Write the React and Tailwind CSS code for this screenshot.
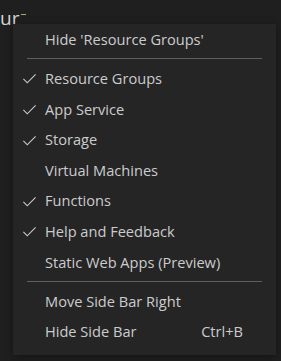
import React from "react";

const items = [
  { label: "Resource Groups", checked: true },
  { label: "App Service", checked: true },
  { label: "Storage", checked: true },
  { label: "Virtual Machines", checked: false },
  { label: "Functions", checked: true },
  { label: "Help and Feedback", checked: true },
  { label: "Static Web Apps (Preview)", checked: false },
];

function Check() {
  return (
    <svg width="15" height="15" viewBox="0 0 16 16" fill="none" className="text-[#cccccc]">
      <path d="M1.5 8.5 L5.6 12.6 L14.5 3.6" stroke="currentColor" strokeWidth="1.2" />
    </svg>
  );
}

function Item({ label, checked, keybinding }) {
  return (
    <div className="h-[30.6px] flex items-center">
      <div className="w-[32px] flex justify-end pr-[8px]">{checked && <Check />}</div>
      <span className="flex-1">{label}</span>
      {keybinding && <span className="pr-[33px]">{keybinding}</span>}
    </div>
  );
}

function Separator() {
  return (
    <div className="h-[8.4px] px-[14px] pt-[3px]">
      <div className="border-t border-[#5f5f5f]" />
    </div>
  );
}

export default function App() {
  return (
    <div className="relative w-[281px] h-[361px] overflow-hidden bg-[#1f1f1f] font-['Open_Sans',sans-serif] text-[#cccccc]">
      {/* clipped explorer title behind the menu */}
      <div className="flex items-start pt-[6px]">
        <span className="text-[19px] leading-[24px] text-[#d4d4d4]">ur</span>
        <span className="mt-[8px] ml-[2px] w-[5px] h-[1px] bg-[#b0a080]" />
      </div>
      <div className="absolute left-[13px] top-[24px] w-[263px] h-[331px] bg-[#252526] shadow-[0_2px_8px_rgba(0,0,0,0.36)] text-[14.6px] pt-[0.7px]">
        <Item label="Hide 'Resource Groups'" />
        <Separator />
        {items.map((it) => (
          <Item key={it.label} {...it} />
        ))}
        <Separator />
        <Item label="Move Side Bar Right" />
        <Item label="Hide Side Bar" keybinding="Ctrl+B" />
      </div>
    </div>
  );
}
